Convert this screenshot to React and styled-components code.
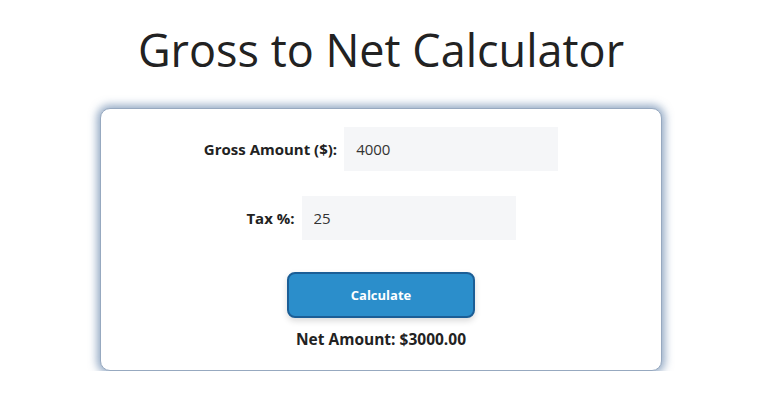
import React, { useState } from 'react';
import styled, { createGlobalStyle } from 'styled-components';

const GlobalStyle = createGlobalStyle`
  html, body {
    margin: 0;
    padding: 0;
    background: #ffffff;
    font-family: "Open Sans", "Noto Sans", sans-serif;
    color: #222;
  }
  * { box-sizing: border-box; }
`;

function App() {
  const [gross, setGross] = useState('4000');
  const [tax, setTax] = useState('25');
  const [net, setNet] = useState(3000);

  const calculate = () => {
    const g = parseFloat(gross) || 0;
    const t = parseFloat(tax) || 0;
    setNet(g - (g * t) / 100);
  };

  return (
    <Page>
      <GlobalStyle />
      <Title>Gross to Net Calculator</Title>
      <Card>
        <Row>
          <Label htmlFor="gross">Gross Amount ($):</Label>
          <Input id="gross" type="text" value={gross} onChange={(e) => setGross(e.target.value)} />
        </Row>
        <Row>
          <Label htmlFor="tax">Tax %:</Label>
          <Input id="tax" type="text" value={tax} onChange={(e) => setTax(e.target.value)} />
        </Row>
        <Button onClick={calculate}>Calculate</Button>
        <Result>Net Amount: ${net.toFixed(2)}</Result>
      </Card>
    </Page>
  );
}

export default App;

const Page = styled.div`
  display: flex;
  flex-direction: column;
  align-items: center;
  padding: 22px 6px 0 0;
`;

const Title = styled.h1`
  margin: 0 0 30px 0;
  font-size: 45px;
  font-weight: 400;
  line-height: 56px;
  color: #222;
`;

const Card = styled.div`
  width: 562px;
  display: flex;
  flex-direction: column;
  align-items: center;
  padding: 18px 20px 20px;
  background: #fff;
  border: 1px solid #97a9c0;
  border-radius: 10px;
  box-shadow: 0 0 9px 3px rgba(60, 100, 150, 0.55);
`;

const Row = styled.div`
  display: flex;
  align-items: center;
  gap: 7px;
  margin-bottom: 25px;
`;

const Label = styled.label`
  font-size: 15px;
  font-weight: 700;
  color: #222;
`;

const Input = styled.input`
  width: 214px;
  height: 44px;
  border: none;
  outline: none;
  background: #f5f6f8;
  padding: 0 12px;
  font-family: inherit;
  font-size: 15px;
  color: #333;
`;

const Button = styled.button`
  margin-top: 7px;
  width: 188px;
  height: 46px;
  background: #2b8ecb;
  border: 2px solid #1b5e96;
  border-radius: 8px;
  color: #fff;
  font-family: inherit;
  font-size: 13px;
  font-weight: 700;
  cursor: pointer;
  box-shadow: 0 3px 6px rgba(0, 0, 0, 0.15);
`;

const Result = styled.div`
  margin-top: 10px;
  font-size: 15.5px;
  font-weight: 700;
  color: #222;
`;
